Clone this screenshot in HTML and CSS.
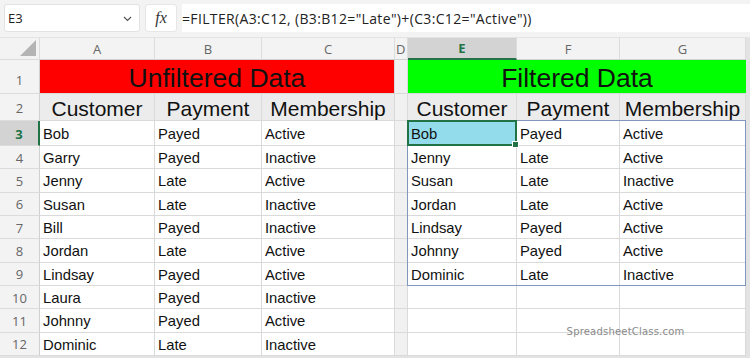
FILE: index.html
```html
<!DOCTYPE html>
<html>
<head>
<meta charset="utf-8">
<link rel="stylesheet" href="styles.css">
</head>
<body>
<div class="app">
  <div class="fbar">
    <div class="namebox"><span>E3</span>
      <svg class="chev" width="9" height="6" viewBox="0 0 9 6"><path d="M1 1 L4.5 4.5 L8 1" fill="none" stroke="#555" stroke-width="1.2"/></svg>
    </div>
    <div class="fxbox">fx</div>
    <div class="formula">=FILTER(A3:C12, (B3:B12="Late")+(C3:C12="Active"))</div>
  </div>
  <div class="stack">
  <div class="sheet">
    <div class="corner"><span class="tri"></span></div>
    <div class="ch">A</div><div class="ch">B</div><div class="ch">C</div><div class="ch chd">D</div><div class="ch sel">E</div><div class="ch">F</div><div class="ch">G</div>

    <div class="rh rh1">1</div>
    <div class="title red">Unfiltered Data</div>
    <div class="c d"></div>
    <div class="title green">Filtered Data</div>

    <div class="rh">2</div>
    <div class="c hd">Customer</div><div class="c hd">Payment</div><div class="c hd">Membership</div><div class="c d"></div><div class="c hd">Customer</div><div class="c hd">Payment</div><div class="c hd">Membership</div>

    <div class="rh rsel">3</div>
    <div class="c">Bob</div><div class="c">Payed</div><div class="c">Active</div><div class="c d"></div><div class="c selcell">Bob</div><div class="c">Payed</div><div class="c">Active</div>

    <div class="rh">4</div>
    <div class="c">Garry</div><div class="c">Payed</div><div class="c">Inactive</div><div class="c d"></div><div class="c">Jenny</div><div class="c">Late</div><div class="c">Active</div>

    <div class="rh">5</div>
    <div class="c">Jenny</div><div class="c">Late</div><div class="c">Active</div><div class="c d"></div><div class="c">Susan</div><div class="c">Late</div><div class="c">Inactive</div>

    <div class="rh">6</div>
    <div class="c">Susan</div><div class="c">Late</div><div class="c">Inactive</div><div class="c d"></div><div class="c">Jordan</div><div class="c">Late</div><div class="c">Active</div>

    <div class="rh">7</div>
    <div class="c">Bill</div><div class="c">Payed</div><div class="c">Inactive</div><div class="c d"></div><div class="c">Lindsay</div><div class="c">Payed</div><div class="c">Active</div>

    <div class="rh">8</div>
    <div class="c">Jordan</div><div class="c">Late</div><div class="c">Active</div><div class="c d"></div><div class="c">Johnny</div><div class="c">Payed</div><div class="c">Active</div>

    <div class="rh">9</div>
    <div class="c">Lindsay</div><div class="c">Payed</div><div class="c">Active</div><div class="c d"></div><div class="c">Dominic</div><div class="c">Late</div><div class="c">Inactive</div>

    <div class="rh">10</div>
    <div class="c">Laura</div><div class="c">Payed</div><div class="c">Inactive</div><div class="c d"></div><div class="c"></div><div class="c"></div><div class="c"></div>

    <div class="rh">11</div>
    <div class="c">Johnny</div><div class="c">Payed</div><div class="c">Active</div><div class="c d"></div><div class="c"></div><div class="c"></div><div class="c"></div>

    <div class="rh">12</div>
    <div class="c">Dominic</div><div class="c">Late</div><div class="c">Inactive</div><div class="c d"></div><div class="c"></div><div class="c"></div><div class="c"></div>
  </div>
  <div class="overlay">
    <div class="spill"></div>
    <div class="selbox"><span class="handle"></span></div>
    <div class="wm">SpreadsheetClass.com</div>
  </div>
  </div>
</div>
</body>
</html>
```

FILE: styles.css
```css
html, body {
  margin: 0;
  padding: 0;
}
body {
  width: 750px;
  height: 358px;
  overflow: hidden;
  background: #e3e3e3;
}
.app {
  width: 750px;
  height: 358px;
  display: flex;
  flex-direction: column;
}
.fbar {
  height: 38px;
  flex: none;
  box-sizing: border-box;
  background: #f3f3f3;
  display: flex;
  align-items: flex-start;
  padding: 4px 0 0 4px;
  gap: 5px;
  border-bottom: 1px solid #e4e4e4;
}
.namebox {
  width: 136px;
  height: 28px;
  box-sizing: border-box;
  background: #fff;
  border: 1px solid #e2e2e2;
  border-radius: 3px;
  display: flex;
  align-items: center;
  justify-content: space-between;
  padding: 0 7px 0 3px;
  font-family: "Open Sans", "Liberation Sans", sans-serif;
  font-size: 13px;
  color: #222;
}
.chev { margin-top: 2px; }
.fxbox {
  width: 32px;
  height: 28px;
  box-sizing: border-box;
  background: #fff;
  border: 1px solid #e6e6e6;
  border-radius: 3px;
  display: flex;
  align-items: center;
  justify-content: center;
  font-family: "Liberation Serif", serif;
  font-style: italic;
  font-size: 16px;
  color: #333;
}
.formula {
  flex: 1;
  height: 28px;
  box-sizing: border-box;
  background: #fff;
  display: flex;
  align-items: center;
  padding-left: 0;
  font-family: "Open Sans", "Liberation Sans", sans-serif;
  font-size: 14px;
  letter-spacing: 0.35px;
  color: #222;
  white-space: nowrap;
}
.stack {
  display: grid;
  width: 746px;
}
.sheet, .overlay {
  grid-area: 1 / 1;
  display: grid;
  grid-template-columns: 40px 115px 107px 133px 13px 109px 103px 126px;
  grid-template-rows: 22px 34px 27px 25px repeat(9, 23.33px);
}
.sheet {
  background: #fff;
  font-family: "Liberation Sans", Arial, sans-serif;
}
.overlay { pointer-events: none; }
.corner {
  background: #f3f3f3;
  border-right: 1px solid #dcdcdc;
  border-bottom: 1px solid #dcdcdc;
  position: relative;
}
.tri {
  position: absolute;
  right: 3px;
  bottom: 3px;
  width: 0;
  height: 0;
  border-left: 16px solid transparent;
  border-bottom: 16px solid #b4b4b4;
}
.ch {
  background: #f3f3f3;
  border-right: 1px solid #dcdcdc;
  border-bottom: 1px solid #d0d0d0;
  display: flex;
  align-items: center;
  justify-content: center;
  font-family: "Open Sans", "Liberation Sans", sans-serif;
  font-size: 13px;
  color: #666;
  overflow: hidden;
}
.chd { justify-content: flex-start; padding-left: 1px; }
.ch.sel {
  background: #d3d3d3;
  border-bottom: 2px solid #217346;
  color: #217346;
  font-weight: bold;
}
.rh {
  background: #f3f3f3;
  border-right: 1px solid #d0d0d0;
  border-bottom: 1px solid #dcdcdc;
  display: flex;
  align-items: center;
  justify-content: center;
  font-family: "Open Sans", "Liberation Sans", sans-serif;
  font-size: 13px;
  color: #666;
  padding-top: 1px;
}
.rh1 { padding-top: 6px; }
.rh.rsel {
  background: #d3d3d3;
  border-right: 2px solid #217346;
  color: #217346;
  font-weight: bold;
}
.c {
  border-right: 1px solid #dadada;
  border-bottom: 1px solid #dadada;
  display: flex;
  align-items: center;
  padding: 2px 0 0 3px;
  font-size: 14.8px;
  color: #111;
  white-space: nowrap;
  overflow: hidden;
}
.c.d { background: #f1f1f1; padding: 0; }
.c.hd {
  background: #ececec;
  justify-content: center;
  padding: 3px 0 0 0;
  font-size: 21px;
  color: #111;
}
.title {
  grid-column: span 3;
  display: flex;
  align-items: center;
  justify-content: center;
  font-size: 26.5px;
  color: #111;
  border-bottom: 1px solid #dadada;
  padding-top: 3px;
}
.red { background: #ff0000; border-right: 1px solid #dadada; }
.green { background: #00ff00; }
.selcell { background: #93dceb; }
.spill {
  grid-column: 6 / 9;
  grid-row: 4 / 11;
  border: 1px solid #7f97bd;
  margin: -1px 0 0 -1px;
}
.selbox {
  grid-column: 6 / 7;
  grid-row: 4 / 5;
  border: 2px solid #217346;
  margin: -1px 0 0 -1px;
  position: relative;
}
.handle {
  position: absolute;
  right: -4px;
  bottom: -4px;
  width: 5px;
  height: 5px;
  background: #217346;
  border: 1px solid #fff;
}
.wm {
  grid-column: 7 / 9;
  grid-row: 12 / 14;
  display: flex;
  align-items: center;
  justify-content: center;
  padding-right: 12px;
  padding-bottom: 2px;
  font-family: "DejaVu Sans", sans-serif;
  font-size: 10px;
  color: #8a8a8a;
  letter-spacing: 0.2px;
}
```
